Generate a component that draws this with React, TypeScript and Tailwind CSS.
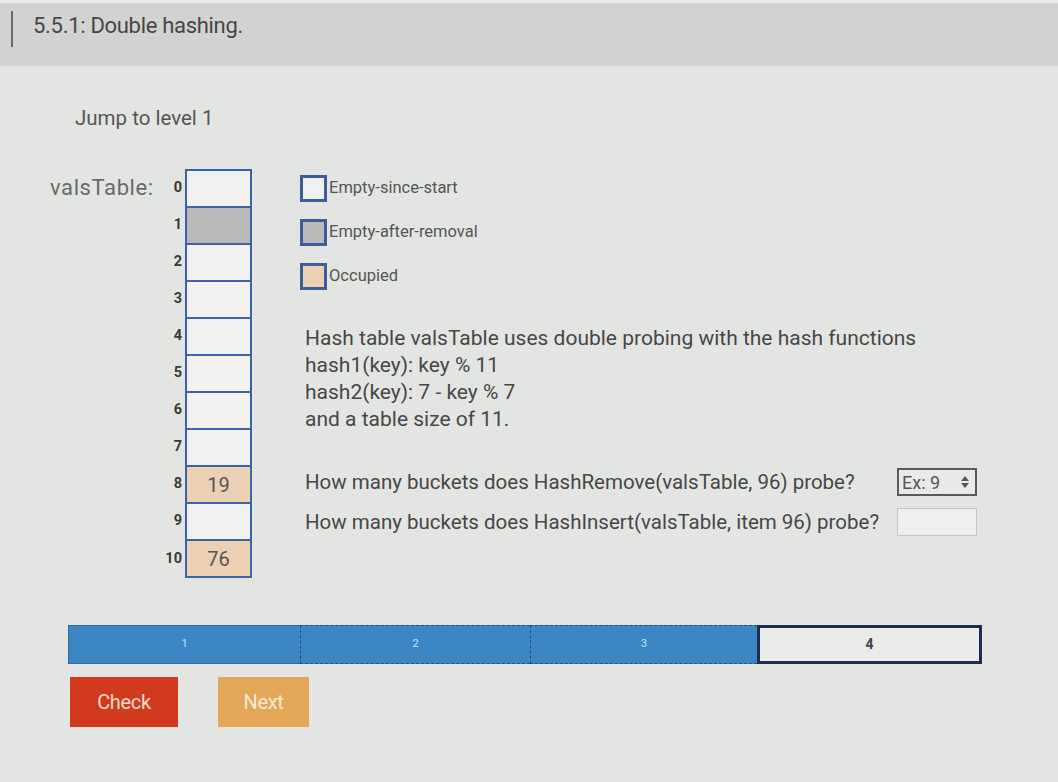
import React from 'react';

type Bucket = { kind: 'empty' | 'removed' | 'occupied'; value?: number };

const buckets: Bucket[] = [
  { kind: 'empty' },
  { kind: 'removed' },
  { kind: 'empty' },
  { kind: 'empty' },
  { kind: 'empty' },
  { kind: 'empty' },
  { kind: 'empty' },
  { kind: 'empty' },
  { kind: 'occupied', value: 19 },
  { kind: 'empty' },
  { kind: 'occupied', value: 76 },
];

const fill = {
  empty: 'bg-[#f1f2f0]',
  removed: 'bg-[#b9b9b8]',
  occupied: 'bg-[#ecd0b3]',
};

const legend: { kind: Bucket['kind']; label: string }[] = [
  { kind: 'empty', label: 'Empty-since-start' },
  { kind: 'removed', label: 'Empty-after-removal' },
  { kind: 'occupied', label: 'Occupied' },
];

export default function App() {
  return (
    <div className="h-[782px] w-[1058px] overflow-hidden bg-[#e3e5e2] font-['Roboto',sans-serif] text-[#484848]">
      <div className="flex h-[66px] items-start border-t-[3px] border-[#ecedeb] bg-[#d2d3d0]">
        <div className="ml-[11px] mt-[8px] h-[36px] w-[2px] bg-[#6b6b6b]" />
        <h1 className="ml-[20px] mt-[10px] text-[22px] leading-[26px] tracking-[-0.3px] text-[#464646]">
          5.5.1: Double hashing.
        </h1>
      </div>

      <div className="pl-[75px] pt-[40px] text-[20.5px] leading-[24px] text-[#555]">Jump to level 1</div>

      <div className="mt-[39px] flex pl-[50px]">
        <div className="flex flex-col">
          {buckets.map((b, i) => (
            <div key={i} className="flex items-center">
              <div className="w-[110px] text-[22px] tracking-[0.6px] text-[#6a6a6a]">{i === 0 ? 'valsTable:' : ''}</div>
              <div className="w-[22px] text-right text-[14.5px] font-bold text-[#3a3a3a]">{i}</div>
              <div
                className={`ml-[3px] flex h-[37px] w-[67px] items-center justify-center border-x-2 border-t-2 border-[#3b63a6] text-[20px] text-[#555] ${fill[b.kind]} ${i === buckets.length - 1 ? 'h-[39px] border-b-2' : ''}`}
              >
                {b.value ?? ''}
              </div>
            </div>
          ))}
        </div>

        <div className="ml-[48px] flex flex-col pt-[6px]">
          <div className="flex flex-col gap-[17px]">
            {legend.map((l) => (
              <div key={l.label} className="flex items-center">
                <div className={`h-[27px] w-[27px] border-[3px] border-[#3c5d9c] ${fill[l.kind]}`} />
                <span className="ml-[2px] text-[16.5px] text-[#555]">{l.label}</span>
              </div>
            ))}
          </div>

          <div className="ml-[5px] mt-[35px] text-[21px] leading-[27px] text-[#474747]">
            <p>Hash table valsTable uses double probing with the hash functions</p>
            <p>hash1(key): key % 11</p>
            <p>hash2(key): 7 - key % 7</p>
            <p>and a table size of 11.</p>
          </div>

          <div className="ml-[5px] mt-[34px] flex w-[672px] flex-col gap-[9px] text-[20.5px] text-[#474747]">
            <div className="flex items-center justify-between">
              <span>How many buckets does HashRemove(valsTable, 96) probe?</span>
              <div className="flex h-[28px] w-[80px] items-center justify-between border-2 border-[#5a5a5a] bg-[#e9eae8] pl-[3px] pr-[6px] text-[18px] text-[#555]">
                <span>Ex: 9</span>
                <span className="flex flex-col items-center leading-none">
                  <svg width="8" height="5" viewBox="0 0 8 5"><path d="M0 5 L4 0 L8 5 Z" fill="#555" /></svg>
                  <svg width="8" height="5" viewBox="0 0 8 5" className="mt-[2px]"><path d="M0 0 L4 5 L8 0 Z" fill="#555" /></svg>
                </span>
              </div>
            </div>
            <div className="flex items-center justify-between">
              <span>How many buckets does HashInsert(valsTable, item 96) probe?</span>
              <div className="h-[28px] w-[80px] border border-[#c4c6c3] bg-[#eeefed]" />
            </div>
          </div>
        </div>
      </div>

      <div className="ml-[68px] mt-[47px] flex h-[39px] w-[914px]">
        <div className="flex w-[232px] items-center justify-center border-y border-l border-[#2e6aa0] bg-[#3b86c3] text-[11px] text-[#cfe2f2]">1</div>
        <div className="flex w-[230px] items-center justify-center border-y border-l border-dashed border-[#1f4e7c] bg-[#3b86c3] text-[11px] text-[#cfe2f2]">2</div>
        <div className="flex w-[227px] items-center justify-center border-y border-l border-dashed border-[#1f4e7c] bg-[#3b86c3] text-[11px] text-[#cfe2f2]">3</div>
        <div className="flex flex-1 items-center justify-center border-[3px] border-[#1e2b52] bg-[#ebecea] text-[14px] font-bold text-[#444]">4</div>
      </div>

      <div className="ml-[70px] mt-[13px] flex gap-[40px]">
        <button className="h-[50px] w-[108px] bg-[#d13a1c] text-[20px] tracking-[-0.3px] text-[#f6ddd0]">Check</button>
        <button className="h-[50px] w-[91px] bg-[#e2a858] text-[20px] tracking-[-0.3px] text-[#f9ead5]">Next</button>
      </div>
    </div>
  );
}
